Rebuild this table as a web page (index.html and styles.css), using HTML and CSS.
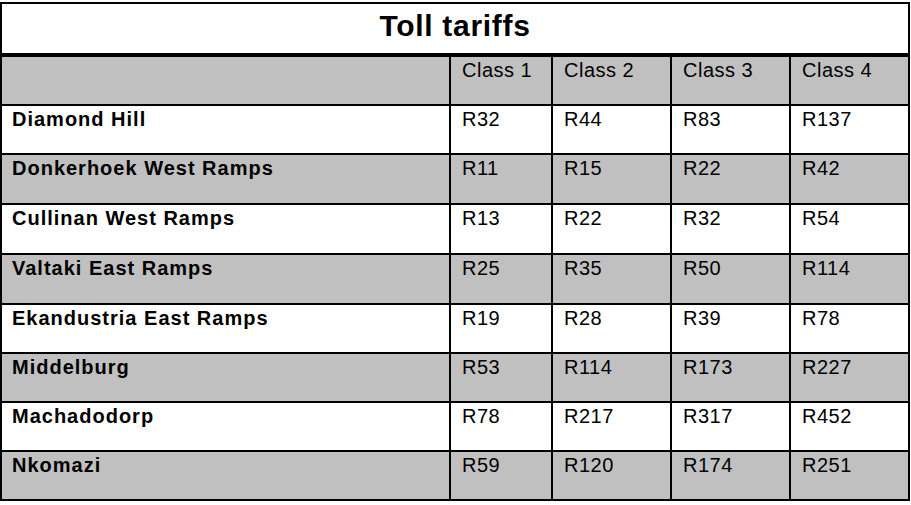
FILE: index.html
```html
<!DOCTYPE html>
<html>
<head>
<meta charset="utf-8">
<link rel="stylesheet" href="styles.css">
</head>
<body>
<div class="sheet">
  <div class="title">Toll tariffs</div>
  <div class="grid">
    <div class="cell gray label"></div>
    <div class="cell gray num">Class 1</div>
    <div class="cell gray num">Class 2</div>
    <div class="cell gray num">Class 3</div>
    <div class="cell gray num">Class 4</div>

    <div class="cell label">Diamond Hill</div>
    <div class="cell num">R32</div>
    <div class="cell num">R44</div>
    <div class="cell num">R83</div>
    <div class="cell num">R137</div>

    <div class="cell gray label">Donkerhoek West Ramps</div>
    <div class="cell gray num">R11</div>
    <div class="cell gray num">R15</div>
    <div class="cell gray num">R22</div>
    <div class="cell gray num">R42</div>

    <div class="cell label">Cullinan West Ramps</div>
    <div class="cell num">R13</div>
    <div class="cell num">R22</div>
    <div class="cell num">R32</div>
    <div class="cell num">R54</div>

    <div class="cell gray label">Valtaki East Ramps</div>
    <div class="cell gray num">R25</div>
    <div class="cell gray num">R35</div>
    <div class="cell gray num">R50</div>
    <div class="cell gray num">R114</div>

    <div class="cell label">Ekandustria East Ramps</div>
    <div class="cell num">R19</div>
    <div class="cell num">R28</div>
    <div class="cell num">R39</div>
    <div class="cell num">R78</div>

    <div class="cell gray label">Middelburg</div>
    <div class="cell gray num">R53</div>
    <div class="cell gray num">R114</div>
    <div class="cell gray num">R173</div>
    <div class="cell gray num">R227</div>

    <div class="cell label">Machadodorp</div>
    <div class="cell num">R78</div>
    <div class="cell num">R217</div>
    <div class="cell num">R317</div>
    <div class="cell num">R452</div>

    <div class="cell gray label">Nkomazi</div>
    <div class="cell gray num">R59</div>
    <div class="cell gray num">R120</div>
    <div class="cell gray num">R174</div>
    <div class="cell gray num">R251</div>
  </div>
</div>
</body>
</html>
```

FILE: styles.css
```css
html, body {
  margin: 0;
  padding: 0;
  background: #ffffff;
}

body {
  font-family: "Liberation Sans", Arial, sans-serif;
  color: #000000;
  padding-top: 2px;
}

.sheet {
  width: 910px;
}

.title {
  border: 2px solid #000;
  border-bottom-width: 4px;
  height: 49px;
  box-sizing: content-box;
  text-align: center;
  font-weight: bold;
  font-size: 30px;
  letter-spacing: 0.7px;
  line-height: 44px;
}

.grid {
  display: grid;
  grid-template-columns: 447px 100px 117px 117px 117px;
  grid-template-rows: 47px 47px 48px 48px 48px 47px 47px 47px 47px;
  column-gap: 2px;
  row-gap: 2px;
  background: #000;
  border: 2px solid #000;
  border-top: 0;
}

.cell {
  background: #ffffff;
  font-size: 20px;
  line-height: 22px;
  padding-top: 2px;
}

.cell.gray {
  background: #c0c0c0;
}

.label {
  font-weight: bold;
  padding-left: 10px;
  letter-spacing: 1px;
}

.num {
  padding-left: 11px;
  letter-spacing: 0.5px;
}
```
